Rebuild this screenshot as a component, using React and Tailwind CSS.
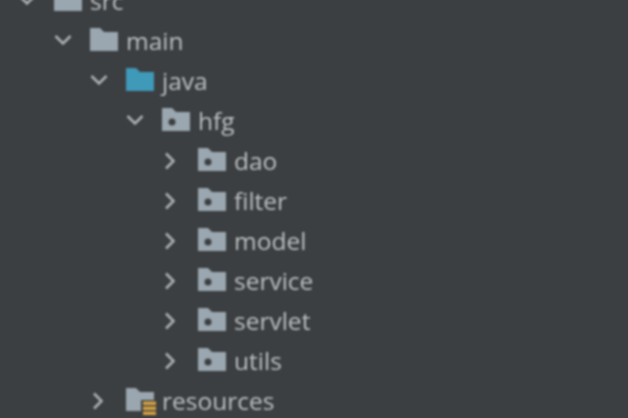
import React from 'react';

function Chevron({ open }) {
  return (
    <svg width="20" height="20" viewBox="0 0 20 20" fill="none" stroke="#a9b0b5" strokeWidth="2.6" className="shrink-0">
      {open ? <path d="M2.5 5 L10 12.5 L17.5 5" /> : <path d="M5 2.5 L12.5 10 L5 17.5" />}
    </svg>
  );
}

function Folder({ kind }) {
  const fill = kind === 'java' ? '#3f99b9' : '#9aa7b0';
  return (
    <svg width="28" height="26" viewBox="0 0 28 26" className="shrink-0 overflow-visible">
      <path d="M0 0 H10 L14 4 H28 V23 H0 Z" fill={fill} />
      {kind === 'package' && <circle cx="10" cy="14" r="3.5" fill="#3c3f41" />}
      {kind === 'resources' && (
        <g>
          <rect x="15" y="12" width="17" height="17" fill="#3c3f41" />
          <rect x="17" y="13.5" width="13" height="3.5" fill="#d9a343" />
          <rect x="17" y="18.5" width="13" height="3.5" fill="#d9a343" />
          <rect x="17" y="23.5" width="13" height="3.5" fill="#d9a343" />
        </g>
      )}
    </svg>
  );
}

const rows = [
  { name: 'src', open: true, kind: 'plain', pad: 'pl-[17px]' },
  { name: 'main', open: true, kind: 'plain', pad: 'pl-[53px]' },
  { name: 'java', open: true, kind: 'java', pad: 'pl-[89px]' },
  { name: 'hfg', open: true, kind: 'package', pad: 'pl-[125px]' },
  { name: 'dao', kind: 'package', pad: 'pl-[161px]' },
  { name: 'filter', kind: 'package', pad: 'pl-[161px]' },
  { name: 'model', kind: 'package', pad: 'pl-[161px]' },
  { name: 'service', kind: 'package', pad: 'pl-[161px]' },
  { name: 'servlet', kind: 'package', pad: 'pl-[161px]' },
  { name: 'utils', kind: 'package', pad: 'pl-[161px]' },
  { name: 'resources', kind: 'resources', pad: 'pl-[89px]' },
];

export default function App() {
  return (
    <div className="w-[628px] h-[418px] overflow-hidden bg-[#3c3f41]">
      <div className="-mt-[19px] blur-[0.8px] font-['Open_Sans',sans-serif] text-[24.5px] font-medium text-[#bcc0c2]">
        {rows.map((r) => (
          <div key={r.name} className={`h-10 flex items-center ${r.pad}`}>
            <Chevron open={r.open} />
            <div className="ml-[17px] mr-[8px] flex">
              <Folder kind={r.kind} />
            </div>
            <span className="leading-none">{r.name}</span>
          </div>
        ))}
      </div>
    </div>
  );
}
